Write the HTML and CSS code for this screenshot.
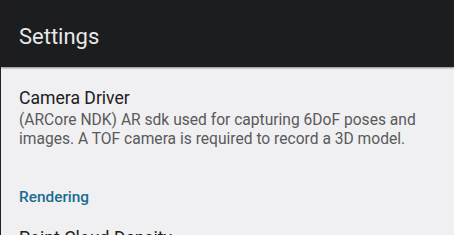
FILE: index.html
```html
<!DOCTYPE html>
<html>
<head>
<meta charset="utf-8">
<link rel="stylesheet" href="styles.css">
</head>
<body>
<div class="app">
  <header class="bar"><h1 class="title">Settings</h1></header>
  <main class="list">
    <div class="pref">
      <div class="pref-title">Camera Driver</div>
      <div class="pref-summary">(ARCore NDK) AR sdk used for capturing 6DoF poses and images. A TOF camera is required to record a 3D model.</div>
    </div>
    <div class="category">Rendering</div>
    <div class="pref">
      <div class="pref-title">Point Cloud Density</div>
    </div>
  </main>
</div>
</body>
</html>
```
FILE: styles.css
```css
html, body { margin: 0; padding: 0; height: 100%; overflow: hidden; }
body { background: #f0eff2; font-family: Roboto, "Noto Sans", sans-serif; }
.app { border-left: 1px solid #2a1a24; min-height: 100%; box-sizing: border-box; }
.bar {
  background: #1c1d1f;
  height: 67px;
  display: flex;
  align-items: center;
  padding: 0 18px;
  box-shadow: 0 1px 2px rgba(0,0,0,0.45);
  position: relative;
}
.title { margin: 0; color: #e8e8e8; font-size: 22px; font-weight: 400; padding-top: 6px; }
.list { padding: 0 18px; }
.pref { padding-top: 20px; }
.pref-title { color: #202020; font-size: 17.6px; line-height: 22px; }
.pref-summary { color: #5a5a5a; font-size: 15.6px; line-height: 19px; margin-top: 1.5px; }
.category { color: #1a6c8f; font-size: 15.4px; font-weight: 500; margin-top: 38.5px; line-height: 20px; }
```
